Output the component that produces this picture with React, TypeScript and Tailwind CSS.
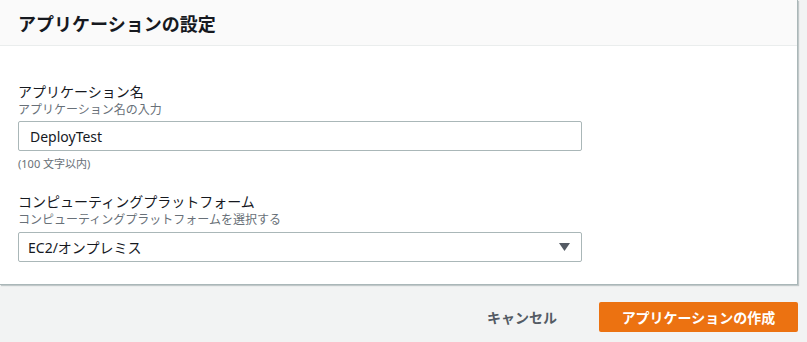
import * as React from "react";

const font = {
  fontFamily: '"Noto Sans", "Noto Sans CJK JP", sans-serif',
};

const Field = ({
  label,
  description,
  children,
  hint,
}: {
  label: string;
  description: string;
  children: React.ReactNode;
  hint?: string;
}) => (
  <div className="flex flex-col">
    <div className="text-[14px] leading-[18px] text-[#16191f]">{label}</div>
    <div className="mt-[1px] text-[12px] leading-[16px] text-[#687078]">
      {description}
    </div>
    <div className="mt-[3px]">{children}</div>
    {hint && (
      <div className="mt-[5px] text-[11px] leading-[16px] text-[#687078]">
        {hint}
      </div>
    )}
  </div>
);

export default function App() {
  const [name, setName] = React.useState("DeployTest");
  const [platform, setPlatform] = React.useState("EC2/オンプレミス");

  return (
    <div className="w-[807px] h-[342px] bg-[#f2f3f3] overflow-hidden" style={font}>
      <section className="w-[798px] bg-white border-r border-b border-[#aab7b8] shadow-[1px_1px_1px_rgba(0,28,36,0.2)]">
        <div className="h-[46px] bg-[#fafafa] border-b border-[#eaeded] px-[18px] pt-[3px] flex items-center">
          <h2 className="text-[18px] font-bold text-[#16191f] leading-[24px]">
            アプリケーションの設定
          </h2>
        </div>
        <div className="px-[18px] pt-[37px] pb-[22px] flex flex-col gap-[21px]">
          <Field
            label="アプリケーション名"
            description="アプリケーション名の入力"
            hint="(100 文字以内)"
          >
            <input
              value={name}
              onChange={(e) => setName(e.target.value)}
              className="w-[564px] h-[30px] border border-[#aab7b8] rounded-[2px] px-[11px] text-[14px] text-[#16191f] outline-none"
              style={font}
            />
          </Field>
          <Field
            label="コンピューティングプラットフォーム"
            description="コンピューティングプラットフォームを選択する"
          >
            <div className="relative w-[564px] mt-[1px]">
              <select
                value={platform}
                onChange={(e) => setPlatform(e.target.value)}
                className="appearance-none w-full h-[30px] border border-[#aab7b8] rounded-[2px] pl-[9px] pr-8 text-[14px] text-[#16191f] bg-white outline-none"
                style={font}
              >
                <option>EC2/オンプレミス</option>
                <option>AWS Lambda</option>
                <option>Amazon ECS</option>
              </select>
              <svg
                className="absolute right-[12px] top-[11px] pointer-events-none"
                width="11"
                height="8"
                viewBox="0 0 11 8"
              >
                <path d="M0 0 L11 0 L5.5 8 Z" fill="#545b64" />
              </svg>
            </div>
          </Field>
        </div>
      </section>
      <div className="w-[798px] flex justify-end items-center gap-[42px] pt-[17px]">
        <button className="text-[14px] font-bold text-[#545b64]" style={font}>
          キャンセル
        </button>
        <button
          className="w-[199px] h-[30px] bg-[#ec7211] rounded-[2px] text-[14px] font-bold text-white"
          style={font}
        >
          アプリケーションの作成
        </button>
      </div>
    </div>
  );
}
